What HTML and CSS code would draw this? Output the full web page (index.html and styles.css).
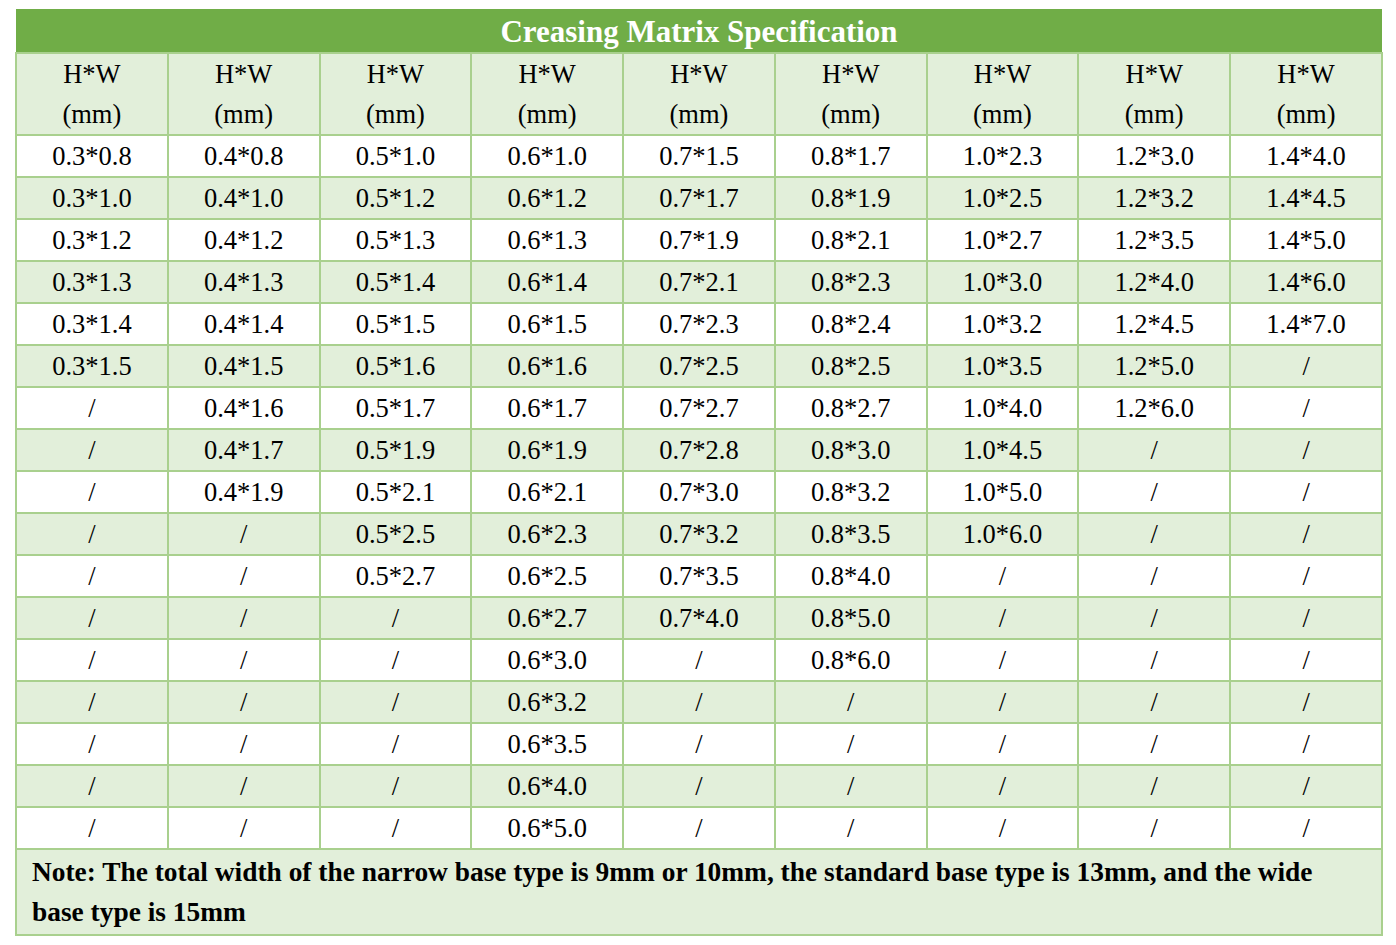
FILE: index.html
```html
<!DOCTYPE html>
<html>
<head>
<meta charset="utf-8">
<link rel="stylesheet" href="styles.css">
</head>
<body>
<table class="spec">
<colgroup><col><col><col><col><col><col><col><col><col></colgroup>
<tr class="title"><th colspan="9">Creasing Matrix Specification</th></tr>
<tr class="head"><td>H*W<br>(mm)</td><td>H*W<br>(mm)</td><td>H*W<br>(mm)</td><td>H*W<br>(mm)</td><td>H*W<br>(mm)</td><td>H*W<br>(mm)</td><td>H*W<br>(mm)</td><td>H*W<br>(mm)</td><td>H*W<br>(mm)</td></tr>
<tr class="w"><td>0.3*0.8</td><td>0.4*0.8</td><td>0.5*1.0</td><td>0.6*1.0</td><td>0.7*1.5</td><td>0.8*1.7</td><td>1.0*2.3</td><td>1.2*3.0</td><td>1.4*4.0</td></tr>
<tr class="g"><td>0.3*1.0</td><td>0.4*1.0</td><td>0.5*1.2</td><td>0.6*1.2</td><td>0.7*1.7</td><td>0.8*1.9</td><td>1.0*2.5</td><td>1.2*3.2</td><td>1.4*4.5</td></tr>
<tr class="w"><td>0.3*1.2</td><td>0.4*1.2</td><td>0.5*1.3</td><td>0.6*1.3</td><td>0.7*1.9</td><td>0.8*2.1</td><td>1.0*2.7</td><td>1.2*3.5</td><td>1.4*5.0</td></tr>
<tr class="g"><td>0.3*1.3</td><td>0.4*1.3</td><td>0.5*1.4</td><td>0.6*1.4</td><td>0.7*2.1</td><td>0.8*2.3</td><td>1.0*3.0</td><td>1.2*4.0</td><td>1.4*6.0</td></tr>
<tr class="w"><td>0.3*1.4</td><td>0.4*1.4</td><td>0.5*1.5</td><td>0.6*1.5</td><td>0.7*2.3</td><td>0.8*2.4</td><td>1.0*3.2</td><td>1.2*4.5</td><td>1.4*7.0</td></tr>
<tr class="g"><td>0.3*1.5</td><td>0.4*1.5</td><td>0.5*1.6</td><td>0.6*1.6</td><td>0.7*2.5</td><td>0.8*2.5</td><td>1.0*3.5</td><td>1.2*5.0</td><td>/</td></tr>
<tr class="w"><td>/</td><td>0.4*1.6</td><td>0.5*1.7</td><td>0.6*1.7</td><td>0.7*2.7</td><td>0.8*2.7</td><td>1.0*4.0</td><td>1.2*6.0</td><td>/</td></tr>
<tr class="g"><td>/</td><td>0.4*1.7</td><td>0.5*1.9</td><td>0.6*1.9</td><td>0.7*2.8</td><td>0.8*3.0</td><td>1.0*4.5</td><td>/</td><td>/</td></tr>
<tr class="w"><td>/</td><td>0.4*1.9</td><td>0.5*2.1</td><td>0.6*2.1</td><td>0.7*3.0</td><td>0.8*3.2</td><td>1.0*5.0</td><td>/</td><td>/</td></tr>
<tr class="g"><td>/</td><td>/</td><td>0.5*2.5</td><td>0.6*2.3</td><td>0.7*3.2</td><td>0.8*3.5</td><td>1.0*6.0</td><td>/</td><td>/</td></tr>
<tr class="w"><td>/</td><td>/</td><td>0.5*2.7</td><td>0.6*2.5</td><td>0.7*3.5</td><td>0.8*4.0</td><td>/</td><td>/</td><td>/</td></tr>
<tr class="g"><td>/</td><td>/</td><td>/</td><td>0.6*2.7</td><td>0.7*4.0</td><td>0.8*5.0</td><td>/</td><td>/</td><td>/</td></tr>
<tr class="w"><td>/</td><td>/</td><td>/</td><td>0.6*3.0</td><td>/</td><td>0.8*6.0</td><td>/</td><td>/</td><td>/</td></tr>
<tr class="g"><td>/</td><td>/</td><td>/</td><td>0.6*3.2</td><td>/</td><td>/</td><td>/</td><td>/</td><td>/</td></tr>
<tr class="w"><td>/</td><td>/</td><td>/</td><td>0.6*3.5</td><td>/</td><td>/</td><td>/</td><td>/</td><td>/</td></tr>
<tr class="g"><td>/</td><td>/</td><td>/</td><td>0.6*4.0</td><td>/</td><td>/</td><td>/</td><td>/</td><td>/</td></tr>
<tr class="w"><td>/</td><td>/</td><td>/</td><td>0.6*5.0</td><td>/</td><td>/</td><td>/</td><td>/</td><td>/</td></tr>
<tr class="note"><td colspan="9">Note: The total width of the narrow base type is 9mm or 10mm, the standard base type is 13mm, and the wide base type is 15mm</td></tr>
</table>
</body>
</html>
```

FILE: styles.css
```css
html, body {
  margin: 0;
  padding: 0;
  background: #ffffff;
}
body {
  padding: 9px 0 0 15px;
  font-family: "Liberation Serif", "Times New Roman", serif;
  color: #000;
}
.spec {
  border-collapse: collapse;
  table-layout: fixed;
  width: 1368px;
  font-size: 26.5px;
}
.spec td {
  border: 2px solid #a9d08e;
  text-align: center;
  vertical-align: middle;
  padding: 0;
  line-height: 40px;
}
.title th {
  background: #70ad47;
  color: #ffffff;
  font-weight: bold;
  font-size: 31px;
  height: 41px;
  line-height: 41px;
  padding: 2px 0 0 0;
  border: 0;
  vertical-align: top;
}
.head td {
  background: #e2efda;
  height: 80px;
  line-height: 40px;
  padding-top: 0;
}
.w td {
  background: #ffffff;
  height: 40px;
}
.g td {
  background: #e2efda;
  height: 40px;
}
.note td {
  background: #e2efda;
  text-align: left;
  font-weight: bold;
  font-size: 27.4px;
  padding: 2px 60px 2px 15px;
  height: 78px;
}
```
